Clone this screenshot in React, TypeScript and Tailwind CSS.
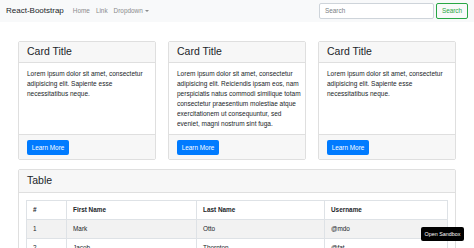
import React from "react";

const font = { fontFamily: '"Liberation Sans", Arial, sans-serif' };

function Card({ lines }: { lines: string[] }) {
  return (
    <div className="flex flex-col border border-[#dfdfdf] rounded-[2px] bg-white">
      <div className="h-[21px] bg-[#f7f7f7] border-b border-[#dfdfdf] px-[8px] flex items-center text-[10.5px] text-[#212529]">
        Card Title
      </div>
      <div className="flex-1 pl-[8px] pr-[2px] pt-[6px] pb-[5px] text-[6.5px] leading-[10px] text-[#212529]">
        {lines.map((l, i) => (
          <div key={i} className="whitespace-nowrap">
            {l}
          </div>
        ))}
      </div>
      <div className="h-[25px] bg-[#f7f7f7] border-t border-[#dfdfdf] px-[8px] pt-[5px]">
        <button className="h-[15px] w-[42px] bg-[#007bff] text-white text-[6.4px] rounded-[2px] flex items-center justify-center">
          Learn More
        </button>
      </div>
    </div>
  );
}

export default function App() {
  const short = [
    "Lorem ipsum dolor sit amet, consectetur",
    "adipisicing elit. Sapiente esse",
    "necessitatibus neque.",
  ];
  const long = [
    "Lorem ipsum dolor sit amet, consectetur",
    "adipisicing elit. Reiciendis ipsam eos, nam",
    "perspiciatis natus commodi similique totam",
    "consectetur praesentium molestiae atque",
    "exercitationem ut consequuntur, sed",
    "eveniet, magni nostrum sint fuga.",
  ];
  const rows = [
    ["1", "Mark", "Otto", "@mdo"],
    ["2", "Jacob", "Thornton", "@fat"],
    ["3", "Larry the Bird", "", "@twitter"],
  ];
  return (
    <div className="relative w-[474px] h-[248px] overflow-hidden bg-white" style={font}>
      <nav className="h-[22px] bg-[#f8f9fa] flex items-center pl-[6px] pr-[6px]">
        <span className="text-[8px] text-[#212529] mr-[9px]">React-Bootstrap</span>
        <div className="flex items-center gap-[6px] text-[6.4px] text-[#8a8b8c]">
          <span>Home</span>
          <span>Link</span>
          <span className="flex items-center gap-[2px]">
            Dropdown
            <span className="inline-block w-0 h-0 border-l-[2px] border-r-[2px] border-t-[2px] border-l-transparent border-r-transparent border-t-[#8a8b8c]" />
          </span>
        </div>
        <div className="ml-auto flex items-center gap-[2px]">
          <div className="w-[115px] h-[16px] border border-[#ced4da] rounded-[2px] bg-white flex items-center px-[5px] text-[6.4px] text-[#7a7f85]">
            Search
          </div>
          <div className="w-[32px] h-[16px] border border-[#28a745] rounded-[2px] flex items-center justify-center text-[6.4px] text-[#28a745]">
            Search
          </div>
        </div>
      </nav>
      <div className="px-[18px] pt-[19px]">
        <div className="grid grid-cols-3 gap-[12px]">
          <Card lines={short} />
          <Card lines={long} />
          <Card lines={short} />
        </div>
        <div className="mt-[9px] border border-[#dfdfdf] rounded-[2px]">
          <div className="h-[23px] bg-[#f7f7f7] border-b border-[#dfdfdf] px-[8px] flex items-center text-[10.5px] text-[#212529]">
            Table
          </div>
          <div className="p-[7px]">
            <table className="w-full border-collapse text-[6.4px] text-[#212529]">
              <thead>
                <tr className="h-[19px]">
                  <th className="w-[40px] border border-[#dee2e6] text-left font-bold px-[6px]">#</th>
                  <th className="w-[130px] border border-[#dee2e6] text-left font-bold px-[6px]">First Name</th>
                  <th className="w-[128px] border border-[#dee2e6] text-left font-bold px-[6px]">Last Name</th>
                  <th className="border border-[#dee2e6] text-left font-bold px-[6px]">Username</th>
                </tr>
              </thead>
              <tbody>
                {rows.map((r, i) => (
                  <tr key={i} className={"h-[19px] " + (i % 2 === 0 ? "bg-[#f2f2f2]" : "bg-white")}>
                    {r.map((c, j) => (
                      <td key={j} className="border border-[#dee2e6] px-[6px]">
                        {c}
                      </td>
                    ))}
                  </tr>
                ))}
              </tbody>
            </table>
          </div>
        </div>
      </div>
      <div className="absolute left-[421px] top-[227px] w-[43px] h-[14px] bg-black rounded-[2px] flex items-center justify-center text-[5.4px] text-white">
        Open Sandbox
      </div>
    </div>
  );
}
